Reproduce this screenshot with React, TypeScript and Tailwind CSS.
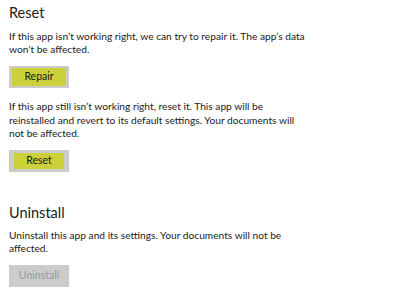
import React from 'react';

const font = { fontFamily: 'Lato, "Noto Sans", sans-serif' };

const Highlighted: React.FC<{ label: string; inset: string; className?: string }> = ({ label, inset, className }) => (
  <div className={`w-[60px] h-[22px] bg-[#cccccc] flex ${inset} ${className || ''}`}>
    <div className="flex-1 bg-[#ccd03a] flex items-center justify-center text-[10.5px] text-[#1a1a1a]">{label}</div>
  </div>
);

const App: React.FC = () => {
  return (
    <div className="w-[400px] h-[297px] bg-white overflow-hidden pl-[9px] text-[#1b1b1b]" style={font}>
      <h2 className="pt-[3px] text-[14.5px] leading-[20px]">Reset</h2>
      <p className="mt-[7px] text-[10.2px] leading-[12.5px]">
        <span className="block whitespace-nowrap">If this app isn’t working right, we can try to repair it. The app’s data</span>
        <span className="block whitespace-nowrap">won’t be affected.</span>
      </p>
      <Highlighted label="Repair" inset="px-[3px] py-[2px]" className="mt-[11px]" />

      <p className="mt-[12px] text-[10.2px] leading-[13.5px]">
        <span className="block whitespace-nowrap">If this app still isn’t working right, reset it. This app will be</span>
        <span className="block whitespace-nowrap">reinstalled and revert to its default settings. Your documents will</span>
        <span className="block whitespace-nowrap">not be affected.</span>
      </p>
      <Highlighted label="Reset" inset="px-[5px] py-[3px]" className="mt-[9px]" />

      <h2 className="mt-[31px] text-[14.5px] leading-[20px]">Uninstall</h2>
      <p className="mt-[6px] text-[10.2px] leading-[13px]">
        <span className="block whitespace-nowrap">Uninstall this app and its settings. Your documents will not be</span>
        <span className="block whitespace-nowrap">affected.</span>
      </p>
      <div className="mt-[10px] w-[60px] h-[22px] bg-[#cccccc] flex items-center justify-center text-[10.5px] text-[#9a9a9a]">
        Uninstall
      </div>
    </div>
  );
};

export default App;
